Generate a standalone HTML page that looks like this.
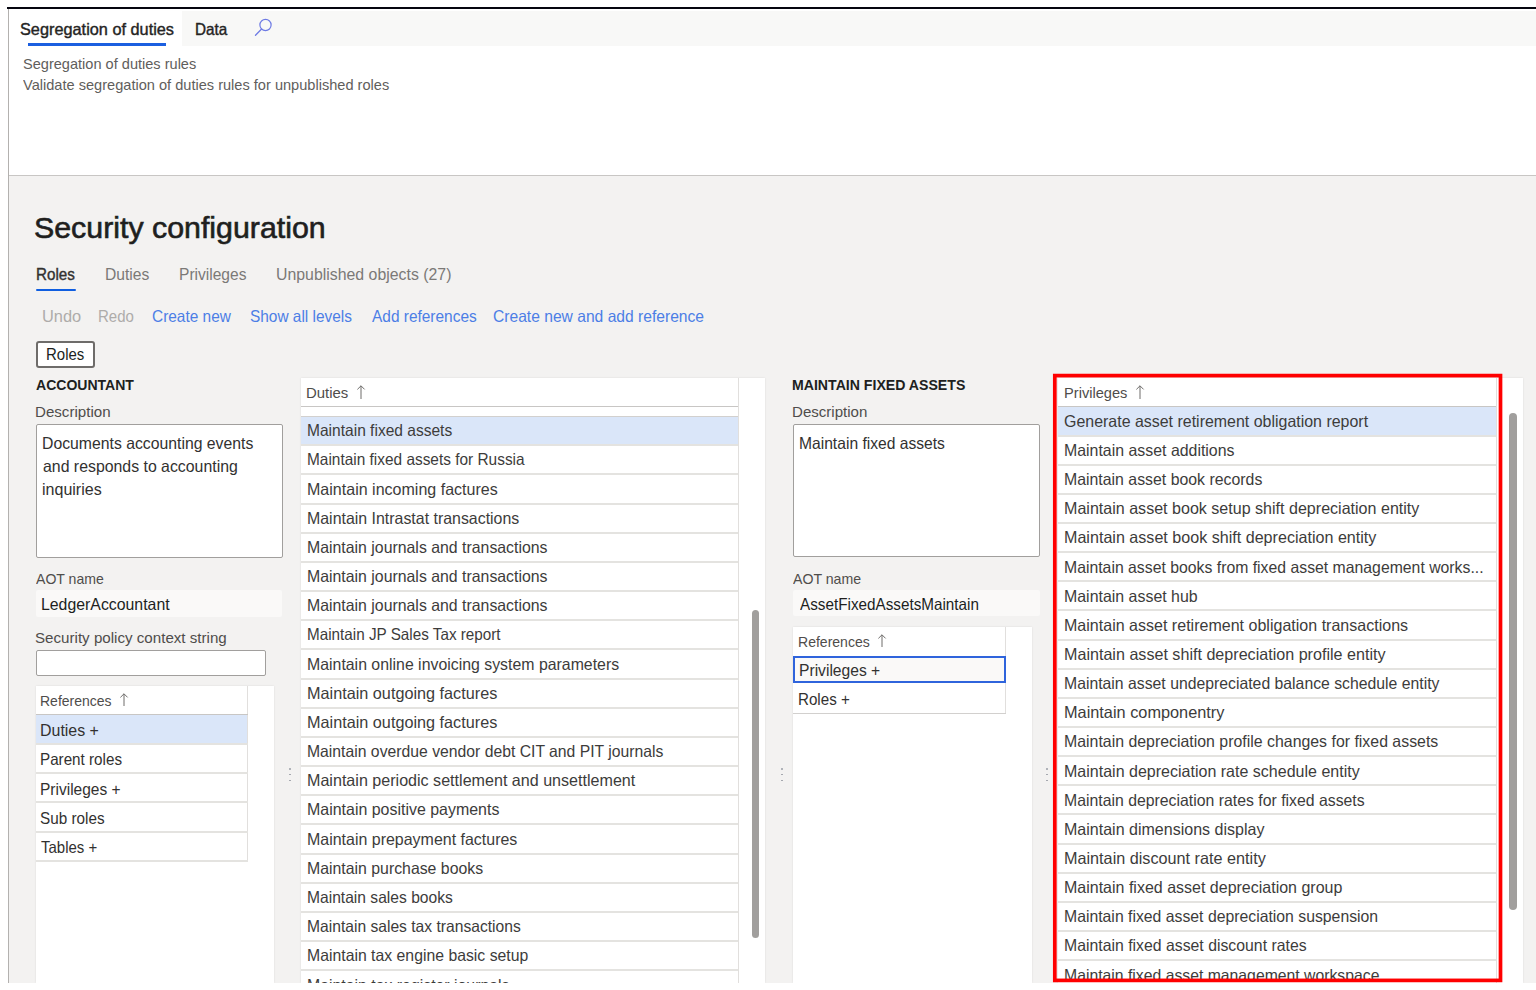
<!DOCTYPE html>
<html><head><meta charset="utf-8"><style>
html,body{margin:0;padding:0;width:1536px;height:990px;overflow:hidden;background:#fff;}
.t{position:absolute;white-space:nowrap;line-height:1;font-family:"Liberation Sans", sans-serif;transform-origin:0 0;}
.r{position:absolute;}
svg.r{overflow:visible}
</style></head><body>
<div class="r" style="left:0px;top:0px;width:1536.00px;height:990.00px;background:#ffffff;"></div>
<div class="r" style="left:7px;top:6.5px;width:1529.00px;height:2.50px;background:#05050f;"></div>
<div class="r" style="left:8px;top:9px;width:1.00px;height:974.00px;background:#b3b1af;"></div>
<div class="r" style="left:182px;top:11px;width:1354.00px;height:35.00px;background:#f8f8f7;"></div>
<div class="t" style="left:19.70px;top:20.68px;font-size:16.5px;color:#252423;-webkit-text-stroke:0.4px #252423;transform:scaleX(0.9875);">Segregation of duties</div>
<div class="r" style="left:28px;top:43px;width:138.00px;height:3.00px;background:#1b5fe0;"></div>
<div class="t" style="left:195.07px;top:20.68px;font-size:16.5px;color:#252423;-webkit-text-stroke:0.4px #252423;transform:scaleX(0.9257);">Data</div>
<svg class="r" style="left:252px;top:16px" width="22" height="22" viewBox="0 0 22 22"><circle cx="13.5" cy="9" r="5.6" fill="none" stroke="#6e7be4" stroke-width="1.2"/><path d="M9.6 13L3.5 19.2" stroke="#6e7be4" stroke-width="1.3" stroke-linecap="round"/></svg>
<div class="t" style="left:22.78px;top:56.25px;font-size:15px;color:#5f5e5c;transform:scaleX(0.9709);">Segregation of duties rules</div>
<div class="t" style="left:23.40px;top:77.25px;font-size:15px;color:#5f5e5c;transform:scaleX(0.9724);">Validate segregation of duties rules for unpublished roles</div>
<div class="r" style="left:9px;top:175px;width:1527.00px;height:1.00px;background:#c8c6c4;"></div>
<div class="r" style="left:9px;top:176px;width:1527.00px;height:807.00px;background:#f3f2f1;"></div>
<div class="t" style="left:33.97px;top:213.43px;font-size:29.5px;color:#201f1e;-webkit-text-stroke:0.6px #201f1e;transform:scaleX(1.0284);">Security configuration</div>
<div class="t" style="left:36.28px;top:266.28px;font-size:16.5px;color:#323130;-webkit-text-stroke:0.4px #323130;transform:scaleX(0.9195);">Roles</div>
<div class="r" style="left:36px;top:288.8px;width:39.70px;height:2.70px;background:#0f5ee0;border-radius:1.5px;"></div>
<div class="t" style="left:105.25px;top:266.28px;font-size:16.5px;color:#7b7977;transform:scaleX(0.9478);">Duties</div>
<div class="t" style="left:179.06px;top:266.28px;font-size:16.5px;color:#7b7977;transform:scaleX(0.9429);">Privileges</div>
<div class="t" style="left:276.04px;top:266.28px;font-size:16.5px;color:#7b7977;transform:scaleX(0.9613);">Unpublished objects (27)</div>
<div class="t" style="left:42.01px;top:307.58px;font-size:16.5px;color:#aeacaa;transform:scaleX(0.9947);">Undo</div>
<div class="t" style="left:97.59px;top:307.58px;font-size:16.5px;color:#aeacaa;transform:scaleX(0.9105);">Redo</div>
<div class="t" style="left:152.07px;top:307.58px;font-size:16.5px;color:#4c7ee6;transform:scaleX(0.9345);">Create new</div>
<div class="t" style="left:249.77px;top:307.58px;font-size:16.5px;color:#4c7ee6;transform:scaleX(0.9343);">Show all levels</div>
<div class="t" style="left:371.70px;top:307.58px;font-size:16.5px;color:#4c7ee6;transform:scaleX(0.9357);">Add references</div>
<div class="t" style="left:492.65px;top:307.58px;font-size:16.5px;color:#4c7ee6;transform:scaleX(0.9468);">Create new and add reference</div>
<div class="r" style="left:36px;top:341px;width:58.60px;height:26.90px;background:#ffffff;border:2px solid #6e6c6a;border-radius:3px;box-sizing:border-box;"></div>
<div class="t" style="left:45.89px;top:345.78px;font-size:16.5px;color:#201f1e;transform:scaleX(0.9073);">Roles</div>
<div class="t" style="left:35.70px;top:377.25px;font-size:15px;color:#201f1e;font-weight:700;transform:scaleX(0.9352);">ACCOUNTANT</div>
<div class="t" style="left:35.09px;top:403.95px;font-size:15px;color:#4f4d4b;transform:scaleX(1.0068);">Description</div>
<div class="r" style="left:36px;top:423.5px;width:246.60px;height:134.00px;background:#ffffff;border:1px solid #a19f9d;border-radius:2px;box-sizing:border-box;"></div>
<div class="t" style="left:41.74px;top:434.58px;font-size:16.5px;color:#323130;transform:scaleX(0.9559);">Documents accounting events</div>
<div class="t" style="left:42.70px;top:457.88px;font-size:16.5px;color:#323130;transform:scaleX(0.9609);">and responds to accounting</div>
<div class="t" style="left:41.73px;top:481.38px;font-size:16.5px;color:#323130;transform:scaleX(0.9717);">inquiries</div>
<div class="t" style="left:36.00px;top:570.85px;font-size:15px;color:#4f4d4b;transform:scaleX(0.9389);">AOT name</div>
<div class="r" style="left:36px;top:590.2px;width:246.40px;height:26.40px;background:#faf9f8;border-radius:2px;"></div>
<div class="t" style="left:41.34px;top:595.98px;font-size:16.5px;color:#201f1e;transform:scaleX(0.9602);">LedgerAccountant</div>
<div class="t" style="left:34.99px;top:630.25px;font-size:15px;color:#4f4d4b;transform:scaleX(1.0090);">Security policy context string</div>
<div class="r" style="left:36px;top:649.7px;width:230.40px;height:26.30px;background:#ffffff;border:1px solid #a19f9d;border-radius:2px;box-sizing:border-box;"></div>
<div class="r" style="left:36px;top:685.5px;width:237.90px;height:297.50px;background:#ffffff;box-shadow:0 0 2px rgba(0,0,0,0.10);"></div>
<div class="r" style="left:247px;top:685.5px;width:1.00px;height:175.00px;background:#e1dfdd;"></div>
<div class="t" style="left:40.40px;top:693.12px;font-size:15.5px;color:#4f4d4b;transform:scaleX(0.9026);">References</div>
<svg class="r" style="left:119.3px;top:693px" width="10" height="14" viewBox="0 0 10 14"><path d="M5 0.8V13M1.4 4.4L5 0.8L8.6 4.4" fill="none" stroke="#6f6d6b" stroke-width="1"/></svg>
<div class="r" style="left:36px;top:713.8px;width:212.00px;height:1.00px;background:#c8c6c4;"></div>
<div class="r" style="left:36px;top:714.8px;width:211.00px;height:29.10px;background:#dae6f9;"></div>
<div class="t" style="left:40.33px;top:722.17px;font-size:16.5px;color:#323130;transform:scaleX(0.9661);">Duties +</div>
<div class="r" style="left:36px;top:743.0px;width:212.00px;height:2.00px;background:#e4e3e0;"></div>
<div class="t" style="left:40.38px;top:751.38px;font-size:16.5px;color:#323130;transform:scaleX(0.9216);">Parent roles</div>
<div class="r" style="left:36px;top:772.2px;width:212.00px;height:2.00px;background:#e4e3e0;"></div>
<div class="t" style="left:40.36px;top:780.58px;font-size:16.5px;color:#323130;transform:scaleX(0.9393);">Privileges +</div>
<div class="r" style="left:36px;top:801.4000000000001px;width:212.00px;height:2.00px;background:#e4e3e0;"></div>
<div class="t" style="left:40.37px;top:809.78px;font-size:16.5px;color:#323130;transform:scaleX(0.9261);">Sub roles</div>
<div class="r" style="left:36px;top:830.6000000000001px;width:212.00px;height:2.00px;background:#e4e3e0;"></div>
<div class="t" style="left:41.30px;top:838.98px;font-size:16.5px;color:#323130;transform:scaleX(0.9082);">Tables +</div>
<div class="r" style="left:36px;top:859.8000000000002px;width:212.00px;height:2.00px;background:#e4e3e0;"></div>
<div class="r" style="left:289px;top:768.00px;width:1.5px;height:1.5px;border-radius:1px;background:#9a9ea6"></div>
<div class="r" style="left:289px;top:773.75px;width:1.5px;height:1.5px;border-radius:1px;background:#9a9ea6"></div>
<div class="r" style="left:289px;top:779.50px;width:1.5px;height:1.5px;border-radius:1px;background:#9a9ea6"></div>
<div class="r" style="left:301px;top:378px;width:464.00px;height:605.00px;background:#ffffff;box-shadow:0 0 2px rgba(0,0,0,0.10);"></div>
<div class="r" style="left:738px;top:378px;width:1.00px;height:605.00px;background:#e1dfdd;"></div>
<div class="t" style="left:306.34px;top:385.32px;font-size:15.5px;color:#4f4d4b;transform:scaleX(0.9628);">Duties</div>
<svg class="r" style="left:356.2px;top:385px" width="10" height="15" viewBox="0 0 10 15"><path d="M5 0.8V14M1.4 4.4L5 0.8L8.6 4.4" fill="none" stroke="#6f6d6b" stroke-width="1"/></svg>
<div class="r" style="left:301px;top:406px;width:437.00px;height:1.00px;background:#c8c6c4;"></div>
<div class="r" style="left:301px;top:378px;width:437px;height:605px;overflow:hidden">
<div class="r" style="left:0px;top:37.5px;width:437.00px;height:1.00px;background:#d2d0ce;"></div>
<div class="r" style="left:0px;top:38.5px;width:437.00px;height:28.67px;background:#dae6f9;"></div>
<div class="t" style="left:5.86px;top:44.27px;font-size:16.5px;color:#3d3c3b;transform:scaleX(0.9425);">Maintain fixed assets</div>
<div class="r" style="left:0px;top:66.17px;width:437.00px;height:2.00px;background:#e4e3e0;"></div>
<div class="t" style="left:5.87px;top:73.44px;font-size:16.5px;color:#3d3c3b;transform:scaleX(0.9341);">Maintain fixed assets for Russia</div>
<div class="r" style="left:0px;top:95.34px;width:437.00px;height:2.00px;background:#e4e3e0;"></div>
<div class="t" style="left:5.83px;top:102.61px;font-size:16.5px;color:#3d3c3b;transform:scaleX(0.9718);">Maintain incoming factures</div>
<div class="r" style="left:0px;top:124.51px;width:437.00px;height:2.00px;background:#e4e3e0;"></div>
<div class="t" style="left:5.84px;top:131.78px;font-size:16.5px;color:#3d3c3b;transform:scaleX(0.9644);">Maintain Intrastat transactions</div>
<div class="r" style="left:0px;top:153.68px;width:437.00px;height:2.00px;background:#e4e3e0;"></div>
<div class="t" style="left:5.84px;top:160.96px;font-size:16.5px;color:#3d3c3b;transform:scaleX(0.9606);">Maintain journals and transactions</div>
<div class="r" style="left:0px;top:182.85000000000002px;width:437.00px;height:2.00px;background:#e4e3e0;"></div>
<div class="t" style="left:5.84px;top:190.13px;font-size:16.5px;color:#3d3c3b;transform:scaleX(0.9606);">Maintain journals and transactions</div>
<div class="r" style="left:0px;top:212.02000000000004px;width:437.00px;height:2.00px;background:#e4e3e0;"></div>
<div class="t" style="left:5.84px;top:219.30px;font-size:16.5px;color:#3d3c3b;transform:scaleX(0.9606);">Maintain journals and transactions</div>
<div class="r" style="left:0px;top:241.19000000000005px;width:437.00px;height:2.00px;background:#e4e3e0;"></div>
<div class="t" style="left:5.88px;top:248.47px;font-size:16.5px;color:#3d3c3b;transform:scaleX(0.9244);">Maintain JP Sales Tax report</div>
<div class="r" style="left:0px;top:270.36000000000007px;width:437.00px;height:2.00px;background:#e4e3e0;"></div>
<div class="t" style="left:5.84px;top:277.64px;font-size:16.5px;color:#3d3c3b;transform:scaleX(0.9614);">Maintain online invoicing system parameters</div>
<div class="r" style="left:0px;top:299.5300000000001px;width:437.00px;height:2.00px;background:#e4e3e0;"></div>
<div class="t" style="left:5.82px;top:306.81px;font-size:16.5px;color:#3d3c3b;transform:scaleX(0.9833);">Maintain outgoing factures</div>
<div class="r" style="left:0px;top:328.7000000000001px;width:437.00px;height:2.00px;background:#e4e3e0;"></div>
<div class="t" style="left:5.82px;top:335.98px;font-size:16.5px;color:#3d3c3b;transform:scaleX(0.9833);">Maintain outgoing factures</div>
<div class="r" style="left:0px;top:357.8700000000001px;width:437.00px;height:2.00px;background:#e4e3e0;"></div>
<div class="t" style="left:5.85px;top:365.15px;font-size:16.5px;color:#3d3c3b;transform:scaleX(0.9540);">Maintain overdue vendor debt CIT and PIT journals</div>
<div class="r" style="left:0px;top:387.04000000000013px;width:437.00px;height:2.00px;background:#e4e3e0;"></div>
<div class="t" style="left:5.82px;top:394.32px;font-size:16.5px;color:#3d3c3b;transform:scaleX(0.9753);">Maintain periodic settlement and unsettlement</div>
<div class="r" style="left:0px;top:416.21000000000015px;width:437.00px;height:2.00px;background:#e4e3e0;"></div>
<div class="t" style="left:5.83px;top:423.49px;font-size:16.5px;color:#3d3c3b;transform:scaleX(0.9667);">Maintain positive payments</div>
<div class="r" style="left:0px;top:445.38000000000017px;width:437.00px;height:2.00px;background:#e4e3e0;"></div>
<div class="t" style="left:5.83px;top:452.66px;font-size:16.5px;color:#3d3c3b;transform:scaleX(0.9676);">Maintain prepayment factures</div>
<div class="r" style="left:0px;top:474.5500000000002px;width:437.00px;height:2.00px;background:#e4e3e0;"></div>
<div class="t" style="left:5.84px;top:481.83px;font-size:16.5px;color:#3d3c3b;transform:scaleX(0.9599);">Maintain purchase books</div>
<div class="r" style="left:0px;top:503.7200000000002px;width:437.00px;height:2.00px;background:#e4e3e0;"></div>
<div class="t" style="left:5.85px;top:511.00px;font-size:16.5px;color:#3d3c3b;transform:scaleX(0.9464);">Maintain sales books</div>
<div class="r" style="left:0px;top:532.8900000000002px;width:437.00px;height:2.00px;background:#e4e3e0;"></div>
<div class="t" style="left:5.85px;top:540.17px;font-size:16.5px;color:#3d3c3b;transform:scaleX(0.9473);">Maintain sales tax transactions</div>
<div class="r" style="left:0px;top:562.0600000000002px;width:437.00px;height:2.00px;background:#e4e3e0;"></div>
<div class="t" style="left:5.84px;top:569.34px;font-size:16.5px;color:#3d3c3b;transform:scaleX(0.9574);">Maintain tax engine basic setup</div>
<div class="r" style="left:0px;top:591.2300000000001px;width:437.00px;height:2.00px;background:#e4e3e0;"></div>
<div class="t" style="left:5.84px;top:598.51px;font-size:16.5px;color:#3d3c3b;transform:scaleX(0.9600);">Maintain tax register journals</div>
<div class="r" style="left:0px;top:620.4000000000001px;width:437.00px;height:2.00px;background:#e4e3e0;"></div>
</div>
<div class="r" style="left:751.6px;top:610px;width:7.80px;height:327.70px;background:#a19f9d;border-radius:4px;"></div>
<div class="r" style="left:781px;top:768.00px;width:1.5px;height:1.5px;border-radius:1px;background:#9a9ea6"></div>
<div class="r" style="left:781px;top:773.75px;width:1.5px;height:1.5px;border-radius:1px;background:#9a9ea6"></div>
<div class="r" style="left:781px;top:779.50px;width:1.5px;height:1.5px;border-radius:1px;background:#9a9ea6"></div>
<div class="t" style="left:792.46px;top:377.25px;font-size:15px;color:#201f1e;font-weight:700;transform:scaleX(0.9410);">MAINTAIN FIXED ASSETS</div>
<div class="t" style="left:792.40px;top:403.95px;font-size:15px;color:#4f4d4b;transform:scaleX(1.0041);">Description</div>
<div class="r" style="left:793.4px;top:423.7px;width:246.60px;height:133.00px;background:#ffffff;border:1px solid #a19f9d;border-radius:2px;box-sizing:border-box;"></div>
<div class="t" style="left:799.25px;top:434.58px;font-size:16.5px;color:#323130;transform:scaleX(0.9471);">Maintain fixed assets</div>
<div class="t" style="left:793.40px;top:570.85px;font-size:15px;color:#4f4d4b;transform:scaleX(0.9431);">AOT name</div>
<div class="r" style="left:793.4px;top:590px;width:246.60px;height:26.00px;background:#faf9f8;border-radius:2px;"></div>
<div class="t" style="left:800.20px;top:595.98px;font-size:16.5px;color:#201f1e;transform:scaleX(0.9249);">AssetFixedAssetsMaintain</div>
<div class="r" style="left:793px;top:627px;width:238.80px;height:356.00px;background:#ffffff;box-shadow:0 0 2px rgba(0,0,0,0.10);"></div>
<div class="r" style="left:1005px;top:627px;width:1.00px;height:86.60px;background:#e1dfdd;"></div>
<div class="t" style="left:797.69px;top:633.83px;font-size:15.5px;color:#4f4d4b;transform:scaleX(0.9051);">References</div>
<svg class="r" style="left:876.7px;top:634px" width="10" height="14" viewBox="0 0 10 14"><path d="M5 0.8V13M1.4 4.4L5 0.8L8.6 4.4" fill="none" stroke="#6f6d6b" stroke-width="1"/></svg>
<div class="r" style="left:793px;top:655.5px;width:212.00px;height:1.00px;background:#c8c6c4;"></div>
<div class="r" style="left:793px;top:656px;width:212.50px;height:27.00px;background:#faf9f8;border:2px solid #2f64dc;box-sizing:border-box;"></div>
<div class="t" style="left:798.85px;top:661.98px;font-size:16.5px;color:#323130;transform:scaleX(0.9476);">Privileges +</div>
<div class="t" style="left:797.68px;top:691.18px;font-size:16.5px;color:#323130;transform:scaleX(0.9182);">Roles +</div>
<div class="r" style="left:793px;top:713.1px;width:213.00px;height:1.00px;background:#d2d0ce;"></div>
<div class="r" style="left:1046px;top:768.00px;width:1.5px;height:1.5px;border-radius:1px;background:#9a9ea6"></div>
<div class="r" style="left:1046px;top:773.75px;width:1.5px;height:1.5px;border-radius:1px;background:#9a9ea6"></div>
<div class="r" style="left:1046px;top:779.50px;width:1.5px;height:1.5px;border-radius:1px;background:#9a9ea6"></div>
<div class="r" style="left:1058px;top:378px;width:464.50px;height:605.00px;background:#ffffff;box-shadow:0 0 2px rgba(0,0,0,0.10);"></div>
<div class="r" style="left:1496px;top:378px;width:1.00px;height:605.00px;background:#e1dfdd;"></div>
<div class="t" style="left:1063.76px;top:385.43px;font-size:15.5px;color:#4f4d4b;transform:scaleX(0.9439);">Privileges</div>
<svg class="r" style="left:1134.6px;top:385px" width="10" height="15" viewBox="0 0 10 15"><path d="M5 0.8V14M1.4 4.4L5 0.8L8.6 4.4" fill="none" stroke="#6f6d6b" stroke-width="1"/></svg>
<div class="r" style="left:1058px;top:406px;width:438.00px;height:1.00px;background:#c8c6c4;"></div>
<div class="r" style="left:1058px;top:378px;width:438px;height:601px;overflow:hidden">
<div class="r" style="left:0px;top:28.5px;width:438.00px;height:28.80px;background:#dae6f9;"></div>
<div class="t" style="left:5.53px;top:34.88px;font-size:16.5px;color:#3d3c3b;transform:scaleX(0.9666);">Generate asset retirement obligation report</div>
<div class="r" style="left:0px;top:56.64px;width:438.00px;height:2.00px;background:#e4e3e0;"></div>
<div class="t" style="left:5.54px;top:64.01px;font-size:16.5px;color:#3d3c3b;transform:scaleX(0.9631);">Maintain asset additions</div>
<div class="r" style="left:0px;top:85.78px;width:438.00px;height:2.00px;background:#e4e3e0;"></div>
<div class="t" style="left:5.54px;top:93.16px;font-size:16.5px;color:#3d3c3b;transform:scaleX(0.9610);">Maintain asset book records</div>
<div class="r" style="left:0px;top:114.92px;width:438.00px;height:2.00px;background:#e4e3e0;"></div>
<div class="t" style="left:5.53px;top:122.29px;font-size:16.5px;color:#3d3c3b;transform:scaleX(0.9734);">Maintain asset book setup shift depreciation entity</div>
<div class="r" style="left:0px;top:144.06px;width:438.00px;height:2.00px;background:#e4e3e0;"></div>
<div class="t" style="left:5.52px;top:151.44px;font-size:16.5px;color:#3d3c3b;transform:scaleX(0.9759);">Maintain asset book shift depreciation entity</div>
<div class="r" style="left:0px;top:173.2px;width:438.00px;height:2.00px;background:#e4e3e0;"></div>
<div class="t" style="left:5.54px;top:180.57px;font-size:16.5px;color:#3d3c3b;transform:scaleX(0.9571);">Maintain asset books from fixed asset management works...</div>
<div class="r" style="left:0px;top:202.33999999999997px;width:438.00px;height:2.00px;background:#e4e3e0;"></div>
<div class="t" style="left:5.54px;top:209.71px;font-size:16.5px;color:#3d3c3b;transform:scaleX(0.9650);">Maintain asset hub</div>
<div class="r" style="left:0px;top:231.47999999999996px;width:438.00px;height:2.00px;background:#e4e3e0;"></div>
<div class="t" style="left:5.53px;top:238.85px;font-size:16.5px;color:#3d3c3b;transform:scaleX(0.9720);">Maintain asset retirement obligation transactions</div>
<div class="r" style="left:0px;top:260.61999999999995px;width:438.00px;height:2.00px;background:#e4e3e0;"></div>
<div class="t" style="left:5.52px;top:267.99px;font-size:16.5px;color:#3d3c3b;transform:scaleX(0.9765);">Maintain asset shift depreciation profile entity</div>
<div class="r" style="left:0px;top:289.75999999999993px;width:438.00px;height:2.00px;background:#e4e3e0;"></div>
<div class="t" style="left:5.54px;top:297.13px;font-size:16.5px;color:#3d3c3b;transform:scaleX(0.9564);">Maintain asset undepreciated balance schedule entity</div>
<div class="r" style="left:0px;top:318.8999999999999px;width:438.00px;height:2.00px;background:#e4e3e0;"></div>
<div class="t" style="left:5.51px;top:326.27px;font-size:16.5px;color:#3d3c3b;transform:scaleX(0.9882);">Maintain componentry</div>
<div class="r" style="left:0px;top:348.0399999999999px;width:438.00px;height:2.00px;background:#e4e3e0;"></div>
<div class="t" style="left:5.54px;top:355.41px;font-size:16.5px;color:#3d3c3b;transform:scaleX(0.9624);">Maintain depreciation profile changes for fixed assets</div>
<div class="r" style="left:0px;top:377.1799999999999px;width:438.00px;height:2.00px;background:#e4e3e0;"></div>
<div class="t" style="left:5.53px;top:384.55px;font-size:16.5px;color:#3d3c3b;transform:scaleX(0.9711);">Maintain depreciation rate schedule entity</div>
<div class="r" style="left:0px;top:406.3199999999999px;width:438.00px;height:2.00px;background:#e4e3e0;"></div>
<div class="t" style="left:5.54px;top:413.69px;font-size:16.5px;color:#3d3c3b;transform:scaleX(0.9585);">Maintain depreciation rates for fixed assets</div>
<div class="r" style="left:0px;top:435.45999999999987px;width:438.00px;height:2.00px;background:#e4e3e0;"></div>
<div class="t" style="left:5.53px;top:442.83px;font-size:16.5px;color:#3d3c3b;transform:scaleX(0.9712);">Maintain dimensions display</div>
<div class="r" style="left:0px;top:464.59999999999985px;width:438.00px;height:2.00px;background:#e4e3e0;"></div>
<div class="t" style="left:5.52px;top:471.97px;font-size:16.5px;color:#3d3c3b;transform:scaleX(0.9820);">Maintain discount rate entity</div>
<div class="r" style="left:0px;top:493.73999999999984px;width:438.00px;height:2.00px;background:#e4e3e0;"></div>
<div class="t" style="left:5.53px;top:501.11px;font-size:16.5px;color:#3d3c3b;transform:scaleX(0.9696);">Maintain fixed asset depreciation group</div>
<div class="r" style="left:0px;top:522.8799999999999px;width:438.00px;height:2.00px;background:#e4e3e0;"></div>
<div class="t" style="left:5.54px;top:530.25px;font-size:16.5px;color:#3d3c3b;transform:scaleX(0.9566);">Maintain fixed asset depreciation suspension</div>
<div class="r" style="left:0px;top:552.0199999999999px;width:438.00px;height:2.00px;background:#e4e3e0;"></div>
<div class="t" style="left:5.54px;top:559.39px;font-size:16.5px;color:#3d3c3b;transform:scaleX(0.9583);">Maintain fixed asset discount rates</div>
<div class="r" style="left:0px;top:581.1599999999999px;width:438.00px;height:2.00px;background:#e4e3e0;"></div>
<div class="t" style="left:5.54px;top:588.53px;font-size:16.5px;color:#3d3c3b;transform:scaleX(0.9553);">Maintain fixed asset management workspace</div>
<div class="r" style="left:0px;top:610.2999999999998px;width:438.00px;height:2.00px;background:#e4e3e0;"></div>
</div>
<div class="r" style="left:1509px;top:412.6px;width:8.20px;height:497.40px;background:#a19f9d;border-radius:4px;"></div>
<div class="r" style="left:9px;top:983px;width:1527.00px;height:7.00px;background:#ffffff;"></div>
<svg class="r" style="left:1050px;top:370px" width="456" height="616" viewBox="0 0 456 616"><rect x="4.8" y="5.6" width="445.7" height="604.8" fill="none" stroke="#ff0000" stroke-width="3.7"/></svg>
</body></html>
